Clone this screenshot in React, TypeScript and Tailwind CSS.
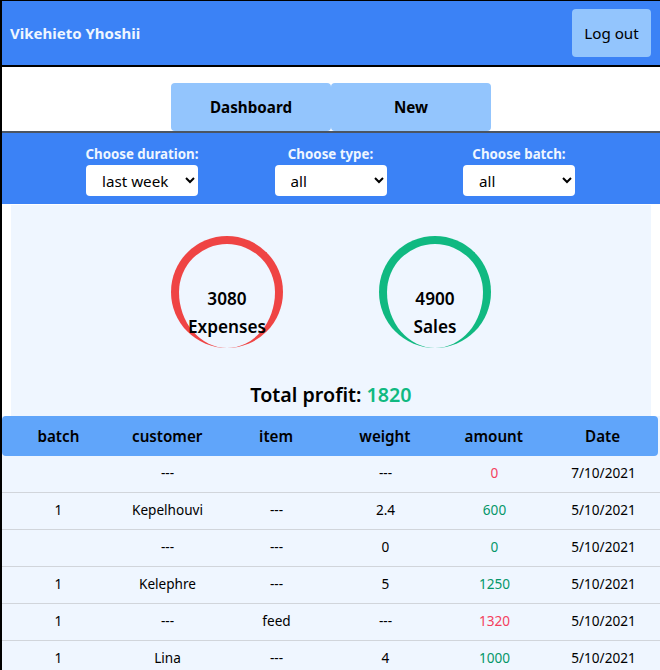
const rows: [string, string, string, string, string, string, string][] = [
  ["", "---", "", "---", "0", "red", "7/10/2021"],
  ["1", "Kepelhouvi", "---", "2.4", "600", "green", "5/10/2021"],
  ["", "---", "---", "0", "0", "green", "5/10/2021"],
  ["1", "Kelephre", "---", "5", "1250", "green", "5/10/2021"],
  ["1", "---", "feed", "---", "1320", "red", "5/10/2021"],
  ["1", "Lina", "---", "4", "1000", "green", "5/10/2021"],
];

function Filter({ label, options }: { label: string; options: string[] }) {
  return (
    <label className="w-[112px] flex flex-col items-center">
      <span className="text-[13.3px] leading-[17px] mb-[2px] font-bold text-[#eff6ff] whitespace-nowrap">{label}</span>
      <select className="w-[112px] h-[31px] bg-white rounded-[4px] text-[15.2px] text-black pl-3 pr-1">
        {options.map((o) => (
          <option key={o}>{o}</option>
        ))}
      </select>
    </label>
  );
}

function Ring({ value, label, color }: { value: string; label: string; color: string }) {
  return (
    <div className={`w-[112px] h-[112px] rounded-full border-8 border-b-0 flex flex-col items-center justify-center pt-[34px] ${color}`}>
      <span className="text-[17.2px] leading-[28px] font-semibold text-black">{value}</span>
      <span className="text-[17.2px] leading-[28px] font-semibold text-black whitespace-nowrap">{label}</span>
    </div>
  );
}

export default function App() {
  return (
    <div className="w-[660px] h-[670px] overflow-hidden bg-white border-l-2 border-black font-['Noto_Sans',sans-serif] text-black">
      <header className="h-[67px] bg-[#3b82f6] border-t border-b-2 border-black flex items-center justify-between pl-2 pr-[9px]">
        <span className="text-[15px] font-bold text-[#eff6ff]">Vikehieto Yhoshii</span>
        <button className="w-[79px] h-[48px] bg-[#93c5fd] rounded-[4px] text-[15.2px]">Log out</button>
      </header>
      <nav className="h-[64px] bg-white flex justify-center items-end">
        <button className="w-[160px] h-[48px] bg-[#93c5fd] rounded-[4px] text-[15.2px] font-bold">Dashboard</button>
        <button className="w-[160px] h-[48px] bg-[#93c5fd] rounded-[4px] text-[15.2px] font-bold">New</button>
      </nav>
      <section className="h-[73px] bg-[#3b82f6] border-t-2 border-[#4b5563] flex justify-start pl-[84px] gap-[76.5px] pt-[13px]">
        <Filter label="Choose duration:" options={["last week"]} />
        <Filter label="Choose type:" options={["all"]} />
        <Filter label="Choose batch:" options={["all"]} />
      </section>
      <section className="h-[211px] mt-px bg-[#eff6ff] mx-[9px] flex flex-col items-center pt-[31px]">
        <div className="flex gap-[96px]">
          <Ring value="3080" label="Expenses" color="border-[#ef4444]" />
          <Ring value="4900" label="Sales" color="border-[#10b981]" />
        </div>
        <p className="mt-[33px] text-[19.7px] leading-[28px] font-semibold">
          Total profit: <span className="text-[#10b981]">1820</span>
        </p>
      </section>
      <div className="bg-[#eff6ff]">
        <div className="mr-[2px] pl-[2px] pr-[1px] grid grid-cols-6 h-[40px] items-center bg-[#60a5fa] rounded-[4px] text-center text-[15.2px] font-semibold">
          {["batch", "customer", "item", "weight", "amount", "Date"].map((h) => (
            <div key={h}>{h}</div>
          ))}
        </div>
        {rows.map((r, i) => (
          <div key={i} className="pl-[2px] pr-[2px] grid grid-cols-6 h-[37px] pb-[1px] items-center text-center text-[13.6px] border-b border-[#d1d5db]">
            <div>{r[0]}</div>
            <div>{r[1]}</div>
            <div>{r[2]}</div>
            <div>{r[3]}</div>
            <div className={r[5] === "red" ? "text-[#f43f5e]" : "text-[#059669]"}>{r[4]}</div>
            <div>{r[6]}</div>
          </div>
        ))}
      </div>
    </div>
  );
}
